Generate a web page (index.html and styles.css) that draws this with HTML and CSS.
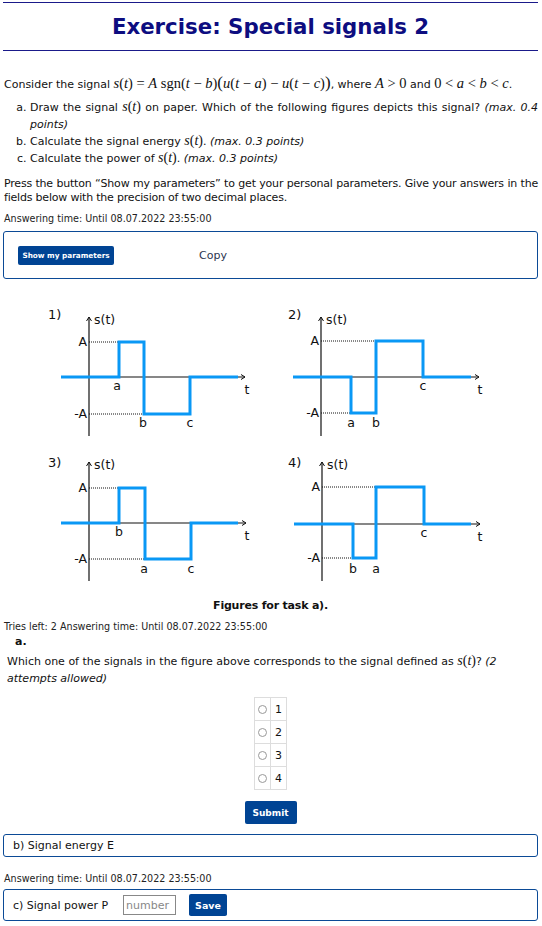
FILE: index.html
```html
<!DOCTYPE html>
<html>
<head>
<meta charset="utf-8">
<link rel="stylesheet" href="styles.css">
</head>
<body>
<div class="page">
  <hr class="rule rule-top">
  <h1 class="title">Exercise: Special signals 2</h1>
  <hr class="rule">

  <p class="intro">Consider the signal <span class="m"><i>s</i>(<i>t</i>) = <i>A</i> sgn(<i>t</i> − <i>b</i>)<span class="big">(</span><i>u</i>(<i>t</i> − <i>a</i>) − <i>u</i>(<i>t</i> − <i>c</i>)<span class="big">)</span></span>, where <span class="m"><i>A</i> &gt; 0</span> and <span class="m">0 &lt; <i>a</i> &lt; <i>b</i> &lt; <i>c</i></span>.</p>

  <ol class="tasks">
    <li>Draw the signal <span class="m"><i>s</i>(<i>t</i>)</span> on paper. Which of the following figures depicts this signal? <em>(max. 0.4 points)</em></li>
    <li>Calculate the signal energy <span class="m"><i>s</i>(<i>t</i>)</span>. <em>(max. 0.3 points)</em></li>
    <li>Calculate the power of <span class="m"><i>s</i>(<i>t</i>)</span>. <em>(max. 0.3 points)</em></li>
  </ol>

  <p class="press">Press the button “Show my parameters” to get your personal parameters. Give your answers in the fields below with the precision of two decimal places.</p>

  <div class="meta meta-1">Answering time: Until 08.07.2022 23:55:00</div>

  <div class="box params">
    <button class="btn btn-params">Show my parameters</button>
    <span class="copy">Copy</span>
  </div>

  <div class="figs">
    <svg class="fig" viewBox="0 0 230 150" width="230" height="150">
      <text x="7" y="23" class="num">1)</text>
      <line x1="48" y1="21" x2="48" y2="140" class="axis"/>
      <polyline points="45.5,25 48,21 50.5,25" class="arrow"/>
      <text x="53" y="28" class="lbl">s(t)</text>
      <line x1="20" y1="81" x2="204" y2="81" class="axis"/>
      <polyline points="200,78.5 204,81 200,83.5" class="arrow"/>
      <line x1="48" y1="46" x2="78" y2="46" class="dot"/>
      <line x1="48" y1="118" x2="103" y2="118" class="dot"/>
      <text x="46" y="50" class="lbl end">A</text>
      <text x="46" y="122" class="lbl end">-A</text>
      <polyline points="20,81 78,81 78,46 103,46 103,118 149,118 149,81 197,81" class="sig"/>
      <text x="76" y="94" class="lbl mid">a</text>
      <text x="102" y="131" class="lbl mid">b</text>
      <text x="149" y="131" class="lbl mid">c</text>
      <text x="206" y="98" class="lbl mid">t</text>
    </svg>
    <svg class="fig" viewBox="0 0 230 150" width="230" height="150">
      <text x="17" y="23" class="num">2)</text>
      <line x1="50" y1="21" x2="50" y2="140" class="axis"/>
      <polyline points="47.5,25 50,21 52.5,25" class="arrow"/>
      <text x="55" y="28" class="lbl">s(t)</text>
      <line x1="22" y1="81" x2="208" y2="81" class="axis"/>
      <polyline points="204,78.5 208,81 204,83.5" class="arrow"/>
      <line x1="50" y1="45" x2="105" y2="45" class="dot"/>
      <line x1="50" y1="117" x2="80" y2="117" class="dot"/>
      <text x="48" y="49" class="lbl end">A</text>
      <text x="48" y="121" class="lbl end">-A</text>
      <polyline points="22,81 80,81 80,117 105,117 105,45 152,45 152,81 200,81" class="sig"/>
      <text x="80" y="131" class="lbl mid">a</text>
      <text x="105" y="131" class="lbl mid">b</text>
      <text x="152" y="94" class="lbl mid">c</text>
      <text x="209" y="98" class="lbl mid">t</text>
    </svg>
    <svg class="fig" viewBox="0 0 230 150" width="230" height="150">
      <text x="7" y="21" class="num">3)</text>
      <line x1="48" y1="16" x2="48" y2="135" class="axis"/>
      <polyline points="45.5,20 48,16 50.5,20" class="arrow"/>
      <text x="53" y="23" class="lbl">s(t)</text>
      <line x1="20" y1="77" x2="205" y2="77" class="axis"/>
      <polyline points="201,74.5 205,77 201,79.5" class="arrow"/>
      <line x1="48" y1="42" x2="78" y2="42" class="dot"/>
      <line x1="48" y1="113" x2="104" y2="113" class="dot"/>
      <text x="46" y="46" class="lbl end">A</text>
      <text x="46" y="117" class="lbl end">-A</text>
      <polyline points="20,77 78,77 78,42 104,42 104,113 150,113 150,77 197,77" class="sig"/>
      <text x="78" y="90" class="lbl mid">b</text>
      <text x="103" y="127" class="lbl mid">a</text>
      <text x="150" y="127" class="lbl mid">c</text>
      <text x="206" y="94" class="lbl mid">t</text>
    </svg>
    <svg class="fig" viewBox="0 0 230 150" width="230" height="150">
      <text x="17" y="21" class="num">4)</text>
      <line x1="51" y1="16" x2="51" y2="135" class="axis"/>
      <polyline points="48.5,20 51,16 53.5,20" class="arrow"/>
      <text x="56" y="23" class="lbl">s(t)</text>
      <line x1="23" y1="78" x2="209" y2="78" class="axis"/>
      <polyline points="205,75.5 209,78 205,80.5" class="arrow"/>
      <line x1="51" y1="41" x2="105" y2="41" class="dot"/>
      <line x1="51" y1="112" x2="82" y2="112" class="dot"/>
      <text x="49" y="45" class="lbl end">A</text>
      <text x="49" y="116" class="lbl end">-A</text>
      <polyline points="23,78 82,78 82,112 105,112 105,41 153,41 153,78 200,78" class="sig"/>
      <text x="82" y="127" class="lbl mid">b</text>
      <text x="105" y="127" class="lbl mid">a</text>
      <text x="153" y="91" class="lbl mid">c</text>
      <text x="209" y="95" class="lbl mid">t</text>
    </svg>
  </div>

  <div class="caption">Figures for task a).</div>
  <div class="meta meta-2">Tries left: 2 Answering time: Until 08.07.2022 23:55:00</div>
  <div class="qlabel">a.</div>
  <p class="question">Which one of the signals in the figure above corresponds to the signal defined as <span class="m"><i>s</i>(<i>t</i>)</span>? <em>(2 attempts allowed)</em></p>

  <table class="choices">
    <tr><td class="rc"><span class="radio"></span></td><td class="val">1</td></tr>
    <tr><td class="rc"><span class="radio"></span></td><td class="val">2</td></tr>
    <tr><td class="rc"><span class="radio"></span></td><td class="val">3</td></tr>
    <tr><td class="rc"><span class="radio"></span></td><td class="val">4</td></tr>
  </table>

  <div class="submit-row"><button class="btn btn-submit">Submit</button></div>

  <div class="box box-b">b) Signal energy E</div>

  <div class="meta meta-3">Answering time: Until 08.07.2022 23:55:00</div>

  <div class="box box-c">
    <span class="field-label">c) Signal power P</span>
    <input class="num-input" type="text" placeholder="number">
    <button class="btn btn-save">Save</button>
  </div>
</div>
</body>
</html>
```

FILE: styles.css
```css
* { box-sizing: border-box; }
html, body { margin: 0; padding: 0; background: #fff; }
body {
  font-family: "DejaVu Sans", Verdana, sans-serif;
  font-size: 11px;
  color: #111;
}
.page { padding: 2px 4px 0 3px; }

.rule { border: 0; border-top: 1px solid #1a1a8a; margin: 0; }
.title {
  margin: 0;
  height: 47px;
  padding-top: 2px;
  line-height: 44px;
  text-align: center;
  font-size: 21.3px;
  font-weight: bold;
  color: #0d0d80;
}

.m { font-family: "Liberation Serif", "DejaVu Serif", serif; font-size: 14px; line-height: 1; }
.intro .m { font-size: 14.5px; }
.m i { font-style: italic; }
.big { font-size: 17px; }
em { font-style: italic; }

.intro { margin: 23px 0 0 1px; line-height: 17px; }
.tasks {
  list-style: lower-alpha;
  margin: 6px 0 0;
  padding-left: 27px;
  line-height: 17px;
  text-align: justify;
}
.press {
  margin: 10px 0 0 1px;
  line-height: 14px;
  text-align: justify;
  letter-spacing: -0.2px;
}

.meta { font-size: 9.6px; color: #222; line-height: 12px; }
.meta-1 { margin: 8px 0 0 1px; }

.box {
  border: 1px solid #0b4a96;
  border-radius: 3px;
}
.params {
  margin-top: 6px;
  height: 48px;
  display: flex;
  align-items: center;
  padding-left: 14px;
}
.btn {
  background: #004494;
  color: #fff;
  border: 0;
  border-radius: 2px;
  font-family: "DejaVu Sans", Verdana, sans-serif;
  font-weight: bold;
  cursor: pointer;
  white-space: nowrap;
}
.btn-params { font-size: 7.3px; width: 96px; height: 19px; padding: 0; }
.copy { margin-left: 85px; color: #2b3550; font-size: 11px; }

.figs {
  margin-top: 17px;
  display: grid;
  grid-template-columns: 230px 230px;
  grid-auto-rows: 150px;
  justify-content: center;
}
.fig { display: block; }
.fig text { font-family: "DejaVu Sans", Verdana, sans-serif; font-size: 12.5px; fill: #111; }
.fig .num { font-size: 13px; }
.fig .end { text-anchor: end; }
.fig .mid { text-anchor: middle; }
.axis { stroke: #111; stroke-width: 1.2; }
.arrow { fill: none; stroke: #111; stroke-width: 1; }
.dot { stroke: #111; stroke-width: 1; stroke-dasharray: 1 1; }
.sig { fill: none; stroke: #0a98f5; stroke-width: 3; stroke-linejoin: miter; }

.caption { text-align: center; font-weight: bold; margin-top: 3px; line-height: 14px; letter-spacing: -0.2px; }
.meta-2 { margin: 8px 0 0 1px; }
.qlabel { font-weight: bold; margin: 2px 0 0 12px; line-height: 13px; }
.question { margin: 5px 0 0 4px; line-height: 17px; }

.choices {
  margin: 10px auto 0;
  border-collapse: collapse;
}
.choices td {
  border: 1px solid #ddd;
  height: 23px;
  padding: 0;
  font-size: 11px;
}
.choices .rc { width: 16px; text-align: center; }
.choices .val { width: 16px; text-align: center; }
.radio {
  display: inline-block;
  width: 9px;
  height: 9px;
  border: 1px solid #999;
  border-radius: 50%;
  vertical-align: middle;
}

.submit-row { text-align: center; margin-top: 11px; }
.btn-submit { font-size: 9px; width: 52px; height: 23px; padding: 0; }

.box-b {
  margin-top: 10px;
  height: 23px;
  line-height: 21px;
  padding-left: 9px;
}
.meta-3 { margin: 16px 0 0 1px; }
.box-c {
  margin-top: 4px;
  height: 32px;
  display: flex;
  align-items: center;
  padding-left: 9px;
}
.field-label { width: 110px; }
.num-input {
  width: 53px;
  height: 20px;
  border: 1px solid #888;
  padding: 0 2px;
  font-family: "DejaVu Sans", Verdana, sans-serif;
  font-size: 11px;
  color: #111;
}
.num-input::placeholder { color: #888; }
.btn-save { margin-left: 13px; width: 38px; height: 22px; font-size: 9.5px; padding: 0; }
```
